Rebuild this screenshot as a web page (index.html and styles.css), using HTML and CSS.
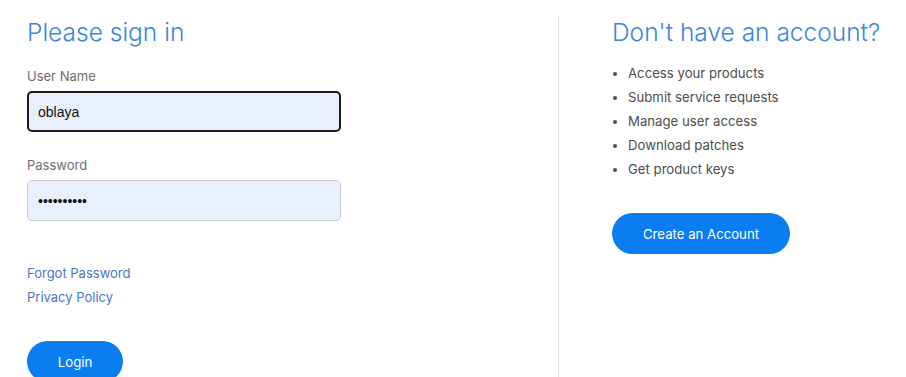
FILE: index.html
```html
<!DOCTYPE html>
<html>

<head>
    <title>Sign In</title>
    <link rel="stylesheet" href="styles.css">
</head>

<body>
    <div class="page">
        <div class="signin">
            <h1>Please sign in</h1>

            <form class="signin-form" onsubmit="return false;">
                <label class="field-label" for="username">User Name</label>
                <input class="field field-focus" id="username" type="text" value="oblaya">

                <label class="field-label" for="password">Password</label>
                <input class="field" id="password" type="password" value="0123456789">

                <div class="links">
                    <a href="#">Forgot Password</a>
                    <a href="#">Privacy Policy</a>
                </div>

                <button class="btn btn-login" type="submit">Login</button>
            </form>
        </div>

        <div class="register">
            <h1>Don't have an account?</h1>
            <ul class="perks">
                <li>Access your products</li>
                <li>Submit service requests</li>
                <li>Manage user access</li>
                <li>Download patches</li>
                <li>Get product keys</li>
            </ul>
            <button class="btn btn-create">Create an Account</button>
        </div>
    </div>
</body>

</html>
```

FILE: styles.css
```css
body {
    margin: 0;
    background-color: #ffffff;
    font-family: Inter, "Noto Sans", sans-serif;
    overflow: hidden;
}

.page {
    display: flex;
    padding-left: 27px;
    height: 377px;
}

h1 {
    margin: 0;
    font-size: 24.5px;
    font-weight: 300;
    line-height: 32px;
    color: #3b86dc;
}

.signin {
    width: 531px;
    padding-top: 16px;
}

.signin-form {
    display: flex;
    flex-direction: column;
    align-items: flex-start;
    margin-top: 19px;
}

.field-label {
    font-size: 13px;
    line-height: 18px;
    color: #6e6e6e;
    margin-bottom: 6px;
}

.field {
    box-sizing: border-box;
    width: 314px;
    height: 41px;
    padding: 0 10px;
    margin-bottom: 24px;
    background-color: #e8f0fe;
    border: 1px solid #c9ccd3;
    border-radius: 5px;
    font-family: "Liberation Sans", Arial, sans-serif;
    font-size: 14px;
    color: #111111;
    outline: none;
}

.field-focus {
    border: 2px solid #1a1a1a;
    padding: 0 9px;
}

.links {
    display: flex;
    flex-direction: column;
    margin-top: 19px;
    gap: 6px;
}

.links a {
    font-size: 13px;
    line-height: 18px;
    color: #4677c6;
    text-decoration: none;
}

.btn {
    border: none;
    border-radius: 21px;
    height: 41px;
    background-color: #0a7df1;
    color: #ffffff;
    font-family: Inter, "Noto Sans", sans-serif;
    font-size: 13.2px;
    cursor: pointer;
}

.btn-login {
    width: 96px;
    margin-top: 35px;
}

.register {
    border-left: 1px solid #e2e2e2;
    margin-top: 16px;
    padding-left: 53px;
    padding-top: 0;
}

.perks {
    margin: 13px 0 0 0;
    padding-left: 16px;
    font-size: 13.2px;
    line-height: 24px;
    color: #4d4d4d;
}

.btn-create {
    width: 178px;
    margin-top: 32px;
}
```
